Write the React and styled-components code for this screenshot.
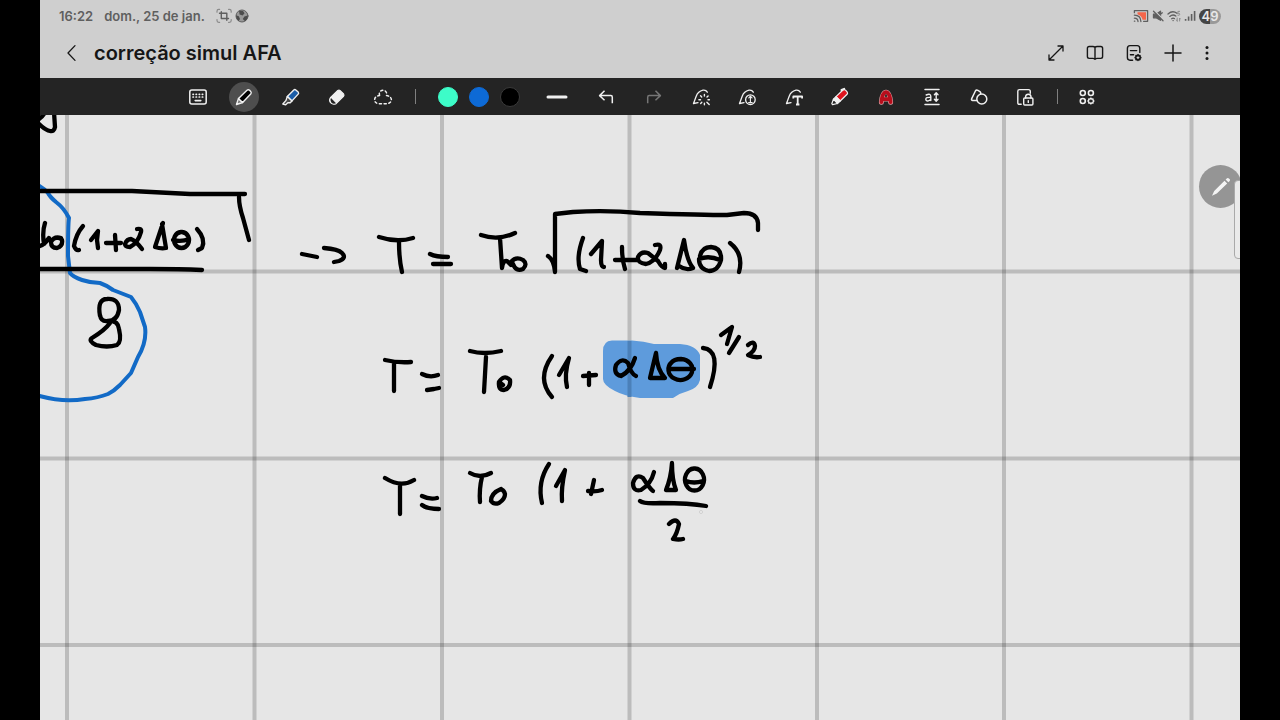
import React from "react";
import styled, { createGlobalStyle } from "styled-components";

const GlobalStyle = createGlobalStyle`
  *, *::before, *::after { box-sizing: border-box; }
  body { margin: 0; background: #000; font-family: Inter, "Noto Sans", sans-serif; }
  button { font: inherit; color: inherit; }
`;

const Screen = styled.div`
  min-height: 100vh;
  margin: 0 40px;
  display: flex;
  flex-direction: column;
  background: #e6e6e6;
`;

const Header = styled.header`
  background: #cfcfcf;
  height: 78px;
  display: flex;
  flex-direction: column;
`;

const StatusBar = styled.div`
  display: flex;
  align-items: center;
  height: 32px;
  padding: 0 19px 0 19px;
  gap: 11px;
  font-size: 13px;
  line-height: 16px;
  font-weight: 600;
  color: #5f5f5f;
`;

const StatusIcons = styled.div`
  display: flex;
  align-items: center;
  gap: 3px;
  margin-left: ${(p) => (p.$end ? "auto" : "0")};
`;

const Battery = styled.span`
  width: 22px;
  height: 15px;
  border-radius: 8px;
  background: linear-gradient(90deg, #454545 50%, #999 50%);
  color: #e8e8e8;
  font-size: 13px;
  line-height: 15px;
  font-weight: 600;
  text-align: center;
`;

const TitleBar = styled.div`
  display: flex;
  align-items: center;
  height: 42px;
  padding: 0 23px 0 16px;
  color: #161616;
`;

const Title = styled.h1`
  margin: 0 auto 0 8px;
  font-size: 20px;
  line-height: 28px;
  font-weight: 600;
  white-space: nowrap;
`;

const Actions = styled.div`
  display: flex;
  align-items: center;
  gap: 9px;
`;

const IconButton = styled.button`
  display: grid;
  place-items: center;
  flex: none;
  width: ${(p) => p.$width || 30}px;
  height: 30px;
  padding: 0;
  border: 0;
  border-radius: 15px;
  background: ${(p) => (p.$active ? "#4e4e4e" : "transparent")};
  opacity: ${(p) => (p.$dim ? 0.4 : 1)};
  cursor: pointer;
`;

const Toolbar = styled.div`
  display: flex;
  align-items: center;
  justify-content: center;
  gap: 17px;
  height: 37px;
  padding-left: 2px;
  background: #242424;
  color: #f0f0f0;
`;

const ToolGroup = styled.div`
  display: flex;
  align-items: center;
  justify-content: space-between;
  width: ${(p) => p.$width}px;
`;

const Palette = styled.div`
  display: flex;
  gap: 11px;
  padding: 0 5px;
`;

const Swatch = styled.button`
  width: 20px;
  height: 20px;
  padding: 0;
  border-radius: 50%;
  border: 1px solid ${(p) => p.$edge};
  background: ${(p) => p.$color};
  cursor: pointer;
`;

const History = styled.div`
  display: flex;
  gap: 18px;
  padding-left: 2px;
`;

const Divider = styled.span`
  width: 1px;
  height: 15px;
  background: #808080;
`;

const Page = styled.main`
  position: relative;
  flex: 1;
  overflow: hidden;
`;

const Sheet = styled.svg`
  display: block;
  width: 100%;
  height: auto;
`;

const PenToggle = styled.button`
  position: absolute;
  top: 50px;
  right: -2px;
  width: 43px;
  height: 43px;
  display: grid;
  place-items: center;
  padding: 0;
  border: 0;
  border-radius: 50%;
  background: #959595;
`;

const ScrollHandle = styled.div`
  position: absolute;
  top: 65px;
  right: -5px;
  width: 11px;
  height: 79px;
  border: 1px solid #a9a9a9;
  border-radius: 4px;
  background: #eaeaea;
`;

const Svg = styled.svg`
  display: block;
  flex: none;
`;

function Icon({ size = 20, width = 1.3, children }) {
  return (
    <Svg
      width={size}
      height={size}
      viewBox={`0 0 ${size} ${size}`}
      fill="none"
      stroke="currentColor"
      strokeWidth={width}
      strokeLinecap="round"
      strokeLinejoin="round"
      aria-hidden="true"
    >
      {children}
    </Svg>
  );
}

const GEAR = "M0-4 1-2.5 2.8-2.8 2.9-1 4 0 2.9 1 2.8 2.8 1 2.5 0 4-1 2.5-2.8 2.8-2.9 1-4 0-2.9-1-2.8-2.8-1-2.5Z";
const FEATHER = "M2.5 16.5 5.2 9.2Q7 4.4 12 3.2Q14.8 2.7 16.3 5.2M2.5 16.5 7 15.6";

const icons = {
  keyboard: (
    <Icon width={1.5}>
      <rect x="1.8" y="3" width="16.4" height="14" rx="2" />
      <path d="M5 7.3h10M5 10h10" strokeWidth="1.7" strokeDasharray="0.4 2.7" />
      <path d="M7.2 13.6h5.6" strokeWidth="1.6" />
    </Icon>
  ),
  pen: (
    <Icon width={1.4}>
      <path d="M2.5 17.5 4.5 11.4 8.6 15.5Z" fill="#777" />
      <path d="M4.5 11.4 13 3.3Q14.3 2.2 15.6 3.3L16.7 4.4Q17.8 5.7 16.7 7L8.6 15.5Z" fill="#000" />
    </Icon>
  ),
  marker: (
    <Icon width={1.4}>
      <path d="M6.3 9.4 12.8 2.9Q13.8 2 14.8 2.9L17.2 5.1Q18.1 6.1 17.2 7.1L11 13.9Z" fill="#1a5da8" />
      <path d="M6.3 9.4 11 13.9 9.2 15.8H6.8L4.7 17.8 1.8 17 5 13.4Z" fill="#4a4a4a" />
    </Icon>
  ),
  eraser: (
    <Icon width={1.2}>
      <path d="M3.4 10.8 10.8 3.5Q12 2.6 13.2 3.6L16.6 7Q17.4 8.2 16.5 9.3L9.1 16.6Q6.1 18.1 3.8 15.9Q1.6 13.4 3.4 10.8Z" fill="#f0f0f0" />
      <path d="M4 10.9 9 16.2Q6.3 17.4 4.3 15.4Q2.5 13.2 4 10.9Z" fill="#242424" stroke="none" />
    </Icon>
  ),
  lasso: (
    <Icon width={1.5}>
      <path d="M6.6 8.4A3.7 3.7 0 1 1 13.4 8.4C16.7 9 18.6 11 18.4 13.2C18 15.8 15.7 16.7 12.5 16.7H6.5C3.6 16.7 1.6 15.4 1.6 12.9C1.6 10.5 3.7 8.8 6.6 8.4Z" strokeDasharray="2.1 2.6" />
    </Icon>
  ),
  undo: (
    <Icon width={1.5}>
      <path d="M8 4.2 3.6 8.6 8 12.8M4 8.6H14.8Q16.3 8.6 16.3 10.2V15.4" strokeLinecap="square" />
    </Icon>
  ),
  redo: (
    <Icon width={1.5}>
      <path d="M12 4.2 16.4 8.6 12 12.8M16 8.6H5.2Q3.7 8.6 3.7 10.2V15.4" strokeLinecap="square" />
    </Icon>
  ),
  line: (
    <Icon size={22} width={3}>
      <path d="M2 11h18" />
    </Icon>
  ),
  penSpark: (
    <Icon>
      <path d={FEATHER} />
      <path d="M13.4 7.4v1.6M9.6 8.8l1.1 1.1M7.9 12.7h1.6M9.7 16.4l1.1-1.1M13.4 16.2v1.6M15.9 15.2l2.3 2.3M17 12.7h1.4M16 10l1.1-1.1" strokeWidth="1.4" />
    </Icon>
  ),
  penTimer: (
    <Icon>
      <path d={FEATHER} />
      <circle cx="13.4" cy="12.7" r="4.8" />
      <path d="M13.4 15.5V9M11.8 10.8 13.4 9.2 15 10.8M11.6 15.6H15.200" strokeWidth="1.1" />
    </Icon>
  ),
  penText: (
    <Icon>
      <path d={FEATHER} />
      <path d="M9.3 11.500V9.5h8.8v2M13.7 9.7v8M12 17.5h3.4" strokeWidth="1.800" strokeLinecap="butt" />
    </Icon>
  ),
  redPen: (
    <Icon width={1.2}>
      <path d="M6 9.6 12.9 3Q14.2 2 15.5 3.1L17.1 4.8Q18.1 6.1 17.1 7.3L10.2 14Z" fill="#e0141e" />
      <path d="M11.5 3 14.2 1.9" strokeWidth="2" />
      <path d="M6 9.6 10.2 14 7.5 16.5 3.4 12.2Z" fill="#f0f0f0" />
      <path d="M3.4 12.2 7.5 16.5 2.5 17.6 1.8 16.7Z" fill="#242424" />
    </Icon>
  ),
  letter: (
    <Icon>
      <path d="M5.4 15.2Q6.1 5.8 10 5.2Q13.9 5.8 14.6 15.2M7 12.1h6" stroke="#e0a3a6" strokeWidth="5" />
      <path d="M5.4 15.2Q6.1 5.8 10 5.2Q13.9 5.8 14.6 15.2M7 12.1h6" stroke="#b80e1c" strokeWidth="3.8" />
      <path d="M9.2 9.5 10 7.3l.8 2.2Z" fill="#242424" stroke="#242424" strokeWidth=".5" />
    </Icon>
  ),
  textHeight: (
    <Icon width={1.5}>
      <path d="M3 2.6h14M3 17.4h14" />
      <path d="M4.2 8Q8.8 6 8.8 9.4V13.6M8.8 10.4Q3.8 10 3.8 12.2Q4 14.3 6.3 13.9Q8 13.6 8.8 12M14.2 6V14M12.4 7.7 14.2 5.8 16 7.7M12.4 12.3 14.2 14.2 16 12.3" strokeWidth="1.4" />
    </Icon>
  ),
  shapes: (
    <Icon width={1.5}>
      <path d="M8 13.4H3.700Q2 13.200 2.7 11.600L6.4 4Q7.3 2.5 8.900 3.4L11 4.600Q12.100 5.400 11.600 7" />
      <circle cx="12.8" cy="12" r="5" />
    </Icon>
  ),
  lockPage: (
    <Icon width={1.4}>
      <path d="M6.2 17.3H4.3Q2.8 17.3 2.8 15.7V4.2Q2.8 2.6 4.4 2.6H13.5Q15.3 2.6 15.3 4.4V6.3" />
      <rect x="8.7" y="11" width="9.2" height="7" rx="1" />
      <path d="M10.6 11V9.6Q10.8 7.2 13.3 7.2Q15.8 7.2 16 9.6V11M13.3 13.6v1.8" />
    </Icon>
  ),
  more: (
    <Icon width={1.6}>
      <circle cx="5.8" cy="6" r="2.5" />
      <circle cx="13.9" cy="6" r="2.5" />
      <circle cx="5.8" cy="14" r="2.5" />
      <path d={GEAR} transform="translate(13.9 14) scale(.75)" strokeWidth="1.8" />
    </Icon>
  ),
  back: (
    <Icon>
      <path d="M14 2.600 7 10 14 17.400" />
    </Icon>
  ),
  expand: (
    <Icon width={1.3}>
      <path d="M3 17 17 3M12 3H17V8M3 12V17H8" />
    </Icon>
  ),
  book: (
    <Icon width={1.4}>
      <path d="M10 4.3Q9.3 3.5 7.8 3.5H4.2Q2.4 3.5 2.4 5.3V13.6Q2.4 15.4 4.2 15.4H7.8Q9.3 15.4 10 16.3Q10.7 15.4 12.2 15.4H15.8Q17.6 15.4 17.6 13.6V5.3Q17.6 3.5 15.8 3.5H12.2Q10.7 3.5 10 4.3V16" />
    </Icon>
  ),
  pageSettings: (
    <Icon width={1.4}>
      <path d="M8.6 17.2H6Q3.4 17.2 3.4 14.6V5.4Q3.4 2.6 6 2.6H13.2Q15.8 2.6 15.8 5.4V9.4M6.4 7.6h6.3M6.4 11.8h3.2" />
      <path d={GEAR} transform="translate(14 14.6) scale(.7)" strokeWidth="2.4" />
    </Icon>
  ),
  plus: (
    <Icon width={1.5}>
      <path d="M10 2v16M2 10h16" />
    </Icon>
  ),
  dots: (
    <Icon width={0}>
      <g fill="currentColor">
        <circle cx="10" cy="4.6" r="1.5" />
        <circle cx="10" cy="10" r="1.5" />
        <circle cx="10" cy="15.4" r="1.5" />
      </g>
    </Icon>
  ),
  capture: (
    <Icon size={16} width={1.2}>
      <path d="M1 4.2V3.2Q1 1.4 2.8 1.4H3.6M12.6 1.4H13.4Q15.2 1.4 15.2 3.2V4.2M1 11.6V12.6Q1 14.4 2.8 14.4H3.6M12.6 14.4H13.4Q15.2 14.4 15.2 12.6V11.6" stroke="#8b8b8b" />
      <path d="M5.3 3.8V10.500H12.5M3.5 5.2H10.8V12.3" strokeWidth="1.4" />
    </Icon>
  ),
  ball: (
    <Icon size={14} width={1}>
      <circle cx="7" cy="7" r="6" fill="#999" />
      <path d="M4 1.8 8 2 9.5 4.3 7.6 6.4 4.6 5.6ZM1 6.2 3.8 7.2 5 10 3.6 12Q1 10 1 6.2ZM9.4 7.5 12.7 6.4Q13 10 10 12.2L7.8 10Z" fill="#4c4c4c" stroke="none" />
    </Icon>
  ),
  cast: (
    <Icon size={16} width={1.3}>
      <path d="M4.5 4.2H13V11.8H9.5Q9 7.7 4.500 6.2Z" fill="#f4664b" stroke="none" />
      <path d="M1.4 4.7V2.7H14.6V13.3H10.6M1.4 7.2Q7.7 7.4 7.9 13.5M1.4 10.2Q4.8 10.4 5 13.5M1.4 13.2h.4" />
    </Icon>
  ),
  mute: (
    <Icon size={12} width={1.3}>
      <path d="M1.5 4.2H4L8.5 1.2V10.3L4 7.8H1.5Z" fill="currentColor" />
      <path d="M2 .5 12 10" stroke="#cfcfcf" strokeWidth="1.500" />
      <path d="M1.5 1.2 11 10.8M10.200 2.8 9.500 3.5" />
    </Icon>
  ),
  wifi: (
    <Icon size={14} width={1.3}>
      <path d="M1 5Q5.5.8 10 4.3M2.8 7.4Q5.8 4.8 8.8 7M4.7 9.7Q6 8.7 7.4 9.6M6 11.6h.2" />
      <path d="M12.6 2.4H10.9V4.2Q13 4 12.8 5.6Q12.4 6.6 10.8 6.2M10.2 9v3M9.4 10.9l.8 1.2M12.6 12V9l.8 1" stroke="#888" strokeWidth=".9" />
    </Icon>
  ),
  signal: (
    <Icon size={12} width={1.6}>
      <path d="M1.6 10.7V9M4.6 10.7V6.600M7.6 10.7V4M10.6 10.7V1" strokeLinecap="butt" />
    </Icon>
  ),
  pencil: (
    <Icon size={22} width={0}>
      <path d="M2 19.7 4.2 15 14.5 4.7 17.2 7.4 6.800 17.600ZM15.6 3.6 17.1 2.2Q18 1.6 18.9 2.4L19.8 3.3Q20.4 4.1 19.7 4.9L18.3 6.3Z" fill="#f4f4f4" />
    </Icon>
  ),
};

const TOOLS = [
  ["Teclado", "keyboard"],
  ["Caneta", "pen", true],
  ["Marcador", "marker"],
  ["Borracha", "eraser"],
  ["Seleção", "lasso"],
];

const EXTRAS = [
  ["Ajustar escrita", "penSpark"],
  ["Alinhar escrita", "penTimer"],
  ["Converter em texto", "penText"],
  ["Caneta favorita", "redPen"],
  ["Estilo de texto", "letter"],
  ["Altura do texto", "textHeight"],
  ["Formas", "shapes"],
  ["Bloquear página", "lockPage"],
];

const COLORS = [
  ["Verde", "#3dfcc8", "#3dfcc8"],
  ["Azul", "#0d6ad6", "#0d6ad6"],
  ["Preto", "#000", "#3a3a3a"],
];

const ACTIONS = [
  ["Tela cheia", "expand"],
  ["Modo de leitura", "book"],
  ["Modelo de página", "pageSettings"],
  ["Adicionar", "plus"],
];

const GRID_X = [67, 254.5, 442, 629.5, 817, 1004, 1191.5];
const GRID_Y = [271.5, 458.5, 645];

// Pen strokes of the note, grouped by line of the working.
const INK = [
  // left: square root, numerator and denominator
  "M54 112 55 127Q54 132 50 131Q45 130 38 123M36 121Q43 117 45 112",
  "M36 191H132Q170 193 190 194L245 194M239 197Q239 206 243 218L249 240",
  "M45 223Q42 232 44 244M36 247Q44 246 49 238M61 238Q54 236 51 242Q51 248 57 248Q63 246 62 240Q60 237 56 238",
  "M83 226Q76 234 74 246Q76 251 79 250M91 240 98 231 97 240 98 248M115 235 116 250M106 243H121",
  "M137 229Q142 228 141 232Q138 243 130 247Q125 247 125 244Q127 239 131 239Q136 241 142 249",
  "M163 223 155 247Q161 249 166 248L162 224M181 232A7.500 8 0 1 0 182 232M173 240Q182 242 189 239M197 229Q206 239 202 248L198 250",
  "M36 269H150Q180 269 202 270",
  "M100 316Q97 299 107 299Q119 298 119 310Q117 321 108 321Q101 322 100 315M108 321Q118 320 119 329Q122 342 117 345Q107 348 96 345Q88 341 92 338Q105 330 110 323",
  // first line
  "M302 254 317 257M324 248Q338 249 342 253Q347 258 339 261L334 262",
  "M379 237Q397 243 413 238M399 242Q399 259 402 272M430 254Q436 257 448 257M433 264H451",
  "M481 235Q498 241 515 233M500 238 502 268Q503 260 507 261L511 265M511 262Q516 256 523 260Q528 264 523 269Q516 272 513 264",
  "M548 256Q554 260 555 272V214Q564 213 573 212Q607 210 640 213Q705 215 727 215L744 213Q757 213 758 223V230",
  "M583 238Q576 257 580 269L586 271M591 254 602 241 601 260Q601 267 604 267M622 247Q622 260 625 269M615 260H637",
  "M655 245Q662 243 660 250Q655 262 646 264Q637 263 638 257Q641 251 648 253L658 261Q662 268 665 268V264",
  "M677 268 684 240Q687 261 693 268Q686 271 679 266M700 256Q702 247 711 247Q722 248 721 260Q718 271 709 271Q699 269 699 259Q709 255 720 260M730 243Q744 254 739 272",
  // second line
  "M385 360Q398 363 411 362M394 363V391M422 374Q430 378 438 375M427 390 434 389 439 388",
  "M470 351Q484 355 501 351M486 357 484 392M499 382Q498 390 504 390Q511 388 510 380Q504 374 499 382L503 385",
  "M552 356Q536 379 552 397M559 375 569 358Q564 375 567 387M589 373V385M583 376 596 375",
  "M721 335 732 327 727 344M739 337 729 353M748 345Q754 340 755 346Q755 351 748 355Q754 358 760 357M703 348Q722 350 710 387",
  "M635 358Q631 371 621 376Q613 374 616 365Q622 357 628 363Q631 374 636 376M656 353 650 378H665Q657 370 656 353M672 362A12 10.500 0 1 0 681 359Q674 359 671 363M670 369H694",
  // third line
  "M385 478Q401 488 414 480M400 486V514M422 496Q430 500 437 498M422 505Q427 509 439 509",
  "M470 473Q480 479 491 473M482 477Q479 489 480 502M501 489Q491 493 491 501Q494 505 499 503Q505 499 505 494Q503 487 497 491",
  "M549 464Q537 482 542 503M556 486 565 470Q561 488 562 501M594 480 591 494M588 491Q596 492 602 490",
  "M654 472Q651 484 641 490Q633 492 633 483Q636 473 643 478Q650 489 653 491M672 463Q671 478 666 490H676Q672 480 672 464M694 468.500A9.500 11 0 1 0 695 468.500M686 481Q694 484 703 481",
  "M640 501Q644 504 660 503Q690 503 706 506M669 524Q676 517 679 524Q677 534 673 539Q679 540 683 539",
];

function Note() {
  return (
    <Sheet viewBox="40 115 1200 605" role="img" aria-label="Resolução manuscrita: T = T0 (1 + αΔθ/2)">
      <g stroke="#000" strokeOpacity=".18" strokeWidth="4">
        {GRID_X.map((x) => (
          <path key={x} d={`M${x} 115V720`} />
        ))}
        {GRID_Y.map((y) => (
          <path key={y} d={`M40 ${y}H1240`} />
        ))}
      </g>
      <path
        d="M603 351Q603 341 612 340.500H632Q644 341 654 344H680Q696 345 700 355V380Q698 388 688 391Q680 393 673 398H640Q624 396 615 391Q603 385 603 379Z"
        fill="#5e9bdc"
      />
      <path d="M629.500 341V397" stroke="#4b80b9" strokeWidth="4" />
      <g fill="none" strokeLinecap="round" strokeLinejoin="round">
        <path
          d="M36 184Q44 188 48 193 50 197 56 202 64 208 69 218 68 224 68 256L70 273Q73 277 82 280T100 283Q106 285 113 290L131 297Q136 303 140 312L145 327Q147 342 138 357L131 373 120 385Q114 391 108 394 98 398 85 399 62 403 36 395"
          stroke="#126ac6"
          strokeWidth="4"
        />
        <g stroke="#000" strokeWidth="4.300">
          {INK.map((d) => (
            <path key={d} d={d} />
          ))}
        </g>
      </g>
      <circle cx="701" cy="512" r="1.500" fill="#f0f0f0" stroke="#cfcfcf" />
    </Sheet>
  );
}

function Tool({ item }) {
  const [label, icon, active] = item;
  return (
    <IconButton type="button" aria-label={label} $active={active} aria-pressed={active}>
      {icons[icon]}
    </IconButton>
  );
}

export default function App() {
  return (
    <>
      <GlobalStyle />
      <Screen>
        <Header>
          <StatusBar>
            <time>16:22</time>
            <span>dom., 25 de jan.</span>
            <StatusIcons>
              {icons.capture}
              {icons.ball}
            </StatusIcons>
            <StatusIcons $end>
              {icons.cast}
              {icons.mute}
              {icons.wifi}
              {icons.signal}
              <Battery>49</Battery>
            </StatusIcons>
          </StatusBar>
          <TitleBar>
            <IconButton type="button" aria-label="Voltar">{icons.back}</IconButton>
            <Title>correção simul AFA</Title>
            <Actions>
              {ACTIONS.map((item) => (
                <Tool key={item[1]} item={item} />
              ))}
              <IconButton type="button" aria-label="Mais opções" $width={20}>{icons.dots}</IconButton>
            </Actions>
          </TitleBar>
        </Header>
        <Toolbar role="toolbar" aria-label="Ferramentas">
          <ToolGroup $width={215}>
            {TOOLS.map((item) => (
              <Tool key={item[1]} item={item} />
            ))}
          </ToolGroup>
          <Divider />
          <Palette>
            {COLORS.map(([label, color, edge]) => (
              <Swatch key={label} type="button" aria-label={label} $color={color} $edge={edge} />
            ))}
          </Palette>
          <IconButton type="button" aria-label="Espessura">{icons.line}</IconButton>
          <History>
            <IconButton type="button" aria-label="Desfazer">{icons.undo}</IconButton>
            <IconButton type="button" aria-label="Refazer" $dim>{icons.redo}</IconButton>
          </History>
          <ToolGroup $width={354}>
            {EXTRAS.map((item) => (
              <Tool key={item[1]} item={item} />
            ))}
          </ToolGroup>
          <Divider />
          <IconButton type="button" aria-label="Mais ferramentas" $width={24}>{icons.more}</IconButton>
        </Toolbar>
        <Page>
          <Note />
          <PenToggle type="button" aria-label="Alternar caneta">{icons.pencil}</PenToggle>
          <ScrollHandle />
        </Page>
      </Screen>
    </>
  );
}
